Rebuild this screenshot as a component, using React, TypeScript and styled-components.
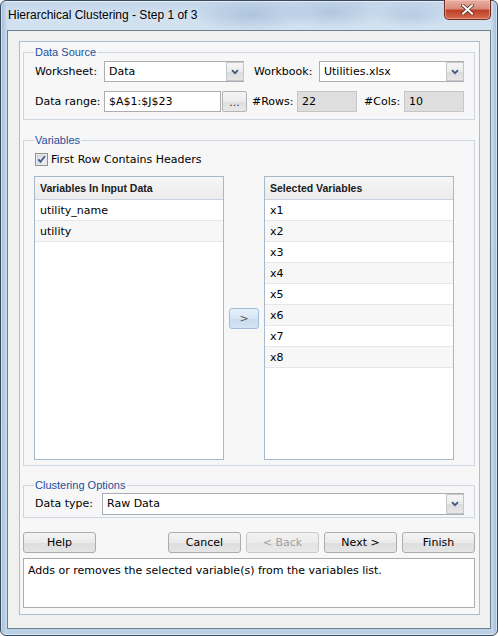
import React from 'react';
import styled, { createGlobalStyle } from 'styled-components';

const GlobalStyle = createGlobalStyle`
  html, body {
    margin: 0;
    padding: 0;
    background: #ffffff;
  }
  body {
    font-family: "DejaVu Sans", Verdana, sans-serif;
    font-size: 11px;
    color: #000;
  }
  * { box-sizing: border-box; }
`;

const Window = styled.div`
  width: 498px;
  height: 636px;
  border: 1px solid #3a4b5e;
  border-radius: 6px;
  padding: 0 6px 5px 6px;
  display: flex;
  flex-direction: column;
  background:
    radial-gradient(ellipse 60px 18px at 250px 14px, rgba(120,150,190,0.35), transparent),
    radial-gradient(ellipse 50px 16px at 330px 12px, rgba(120,150,190,0.3), transparent),
    radial-gradient(ellipse 40px 14px at 410px 14px, rgba(120,150,190,0.25), transparent),
    linear-gradient(90deg, #9fb9d6 0px, #c6d9ec 5px, transparent 7px, transparent 489px, #c6d9ec 491px, #9fb9d6 496px),
    linear-gradient(180deg, #c3d6ea 0%, #d3e2f1 4%, #c6d9ec 40%, #b9cfe6 100%);
  box-shadow: inset 0 0 0 1px rgba(255,255,255,0.55);
`;

const TitleBar = styled.div`
  height: 29px;
  display: flex;
  justify-content: space-between;
  align-items: flex-start;
`;

const Title = styled.div`
  margin-top: 7px;
  padding-left: 1px;
  font-family: "Liberation Sans", Arial, sans-serif;
  font-size: 12px;
  line-height: 15px;
  color: #000;
  text-shadow: 0 0 6px rgba(255,255,255,0.9);
`;

const CloseButton = styled.div`
  width: 47px;
  height: 20px;
  margin-top: -1px;
  border: 1px solid #6d2a1e;
  border-top: none;
  border-radius: 0 0 5px 5px;
  background: linear-gradient(180deg, #e6b1a6 0%, #d98b7a 45%, #c0402a 55%, #d36a4e 100%);
  box-shadow: inset 0 0 0 1px rgba(255,200,190,0.5);
  display: flex;
  align-items: center;
  justify-content: center;
`;

const Client = styled.div`
  border: 1px solid #6e7f90;
  background: #f0f0f0;
  padding: 10px 10px 13px 11px;
`;

const Panel = styled.div`
  border: 1px solid #a9bfd6;
  background: #f7f7f7;
  padding: 3px 4px 6px 3px;
  display: flex;
  flex-direction: column;
`;

const Group = styled.fieldset<{ $gap?: number }>`
  margin: ${p => p.$gap ?? 0}px 0 0 0;
  padding: 0;
  border: 1px solid #cdd7e1;
  min-width: 0;
`;

const Legend = styled.legend`
  margin-left: 10px;
  padding: 0 1px;
  font-family: "Liberation Sans", Arial, sans-serif;
  font-size: 11px;
  line-height: 14px;
  color: #1d4f9b;
`;

const GroupBody = styled.div<{ $pad: string }>`
  padding: ${p => p.$pad};
  display: flex;
  flex-direction: column;
`;

const Row = styled.div<{ $top?: number }>`
  display: flex;
  align-items: center;
  height: 21px;
  margin-top: ${p => p.$top ?? 0}px;
`;

const Label = styled.div<{ $w: number; $left?: number }>`
  width: ${p => p.$w}px;
  margin-left: ${p => p.$left ?? 0}px;
  white-space: nowrap;
`;

const Dropdown = styled.div<{ $w: number; $h?: number }>`
  width: ${p => p.$w}px;
  height: ${p => p.$h ?? 21}px;
  border: 1px solid #abadb3;
  background: #fff;
  display: flex;
  align-items: center;
`;

const DropText = styled.div`
  flex: 1;
  padding-left: 4px;
`;

const DropArrow = styled.div`
  width: 18px;
  height: 100%;
  border: 1px solid #c3c7cc;
  margin: -1px -1px -1px 0;
  background: linear-gradient(180deg, #f6f6f6 0%, #ebebeb 50%, #dcdcdc 51%, #e6e6e6 100%);
  display: flex;
  align-items: center;
  justify-content: center;
`;

const TextBox = styled.div<{ $w: number }>`
  width: ${p => p.$w}px;
  height: 21px;
  border: 1px solid #abadb3;
  background: #fff;
  padding-left: 4px;
  display: flex;
  align-items: center;
`;

const EllipsisButton = styled.div`
  width: 25px;
  height: 21px;
  margin-left: 1px;
  border: 1px solid #b4b4b4;
  border-radius: 2px;
  background: linear-gradient(180deg, #f4f4f4 0%, #ececec 50%, #dedede 51%, #e8e8e8 100%);
  display: flex;
  align-items: flex-end;
  justify-content: center;
  padding-bottom: 3px;
  font-size: 11px;
  line-height: 11px;
  color: #333;
`;

const ReadBox = styled.div`
  width: 60px;
  height: 21px;
  border: 1px solid #c6c6c6;
  background: #dedede;
  padding-left: 4px;
  display: flex;
  align-items: center;
`;

const CheckRow = styled.label`
  display: flex;
  align-items: center;
  gap: 3px;
  height: 13px;
  margin-left: 1px;
`;

const ListsRow = styled.div`
  display: flex;
  align-items: center;
  margin-top: 10px;
`;

const ListBox = styled.div`
  width: 190px;
  height: 284px;
  border: 1px solid #a6b8cc;
  background: #fff;
  display: flex;
  flex-direction: column;
`;

const ListHeader = styled.div`
  height: 23px;
  padding-left: 5px;
  display: flex;
  align-items: center;
  font-family: "Liberation Sans", Arial, sans-serif;
  font-weight: bold;
  font-size: 10.5px;
  color: #1a1a1a;
  background: linear-gradient(180deg, #f6f6f6 0%, #ececec 100%);
  border-bottom: 1px solid #c8d3df;
`;

const ListItem = styled.div<{ $alt: boolean }>`
  height: 21px;
  padding-left: 5px;
  display: flex;
  align-items: center;
  background: ${p => (p.$alt ? '#f7f7f7' : '#ffffff')};
  border-bottom: 1px solid #e6e6e6;
`;

const MoveButton = styled.div`
  width: 30px;
  height: 21px;
  margin: 0 5px;
  border: 1px solid #a3bcd9;
  border-radius: 3px;
  background: linear-gradient(180deg, #e6effa 0%, #d8e6f6 50%, #c9dbf1 51%, #d3e3f5 100%);
  display: flex;
  align-items: center;
  justify-content: center;
  color: #555;
`;

const ButtonRow = styled.div`
  display: flex;
  gap: 5px;
  margin-top: 14px;
`;

const Spacer = styled.div`
  flex: 1;
`;

const Button = styled.div<{ $disabled?: boolean }>`
  width: 73px;
  height: 21px;
  border: 1px solid ${p => (p.$disabled ? '#c9c9c9' : '#acacac')};
  border-radius: 3px;
  background: ${p =>
    p.$disabled
      ? 'linear-gradient(180deg, #f2f2f2 0%, #ececec 50%, #e3e3e3 51%, #e8e8e8 100%)'
      : 'linear-gradient(180deg, #f3f3f3 0%, #ebebeb 50%, #dddddd 51%, #e5e5e5 100%)'};
  color: ${p => (p.$disabled ? '#a0a0a0' : '#000')};
  display: flex;
  align-items: center;
  justify-content: center;
`;

const Description = styled.div`
  margin-top: 5px;
  height: 50px;
  border: 1px solid #abadb3;
  background: #fff;
  padding: 5px 4px;
  line-height: 14px;
`;

const Chevron = () => (
  <svg width="8" height="6" viewBox="0 0 8 6">
    <path d="M1 1.2 L4 4.2 L7 1.2" fill="none" stroke="#3e5879" strokeWidth="1.8" />
  </svg>
);

const CloseGlyph = () => (
  <svg width="13" height="11" viewBox="0 0 13 11">
    <path d="M2 1.5 L11 9.5 M11 1.5 L2 9.5" stroke="#5a2a22" strokeWidth="3.6" strokeLinecap="square" />
    <path d="M2 1.5 L11 9.5 M11 1.5 L2 9.5" stroke="#ffffff" strokeWidth="2" strokeLinecap="square" />
  </svg>
);

const CheckIcon = () => (
  <svg width="13" height="13" viewBox="0 0 13 13">
    <defs>
      <linearGradient id="cbg" x1="0" y1="0" x2="1" y2="1">
        <stop offset="0" stopColor="#d8d8d8" />
        <stop offset="1" stopColor="#f8f8f8" />
      </linearGradient>
    </defs>
    <rect x="0.5" y="0.5" width="12" height="12" fill="#fff" stroke="#8e8f8f" />
    <rect x="2" y="2" width="9" height="9" fill="url(#cbg)" stroke="#b8b8b8" strokeWidth="0.5" />
    <path d="M3.3 6.3 L5.5 8.8 L9.8 3.2" fill="none" stroke="#3e5c9a" strokeWidth="1.8" />
  </svg>
);

const Select: React.FC<{ value: string; width: number; height?: number }> = ({ value, width, height }) => (
  <Dropdown $w={width} $h={height}>
    <DropText>{value}</DropText>
    <DropArrow>
      <Chevron />
    </DropArrow>
  </Dropdown>
);

const inputVars = ['utility_name', 'utility'];
const selectedVars = ['x1', 'x2', 'x3', 'x4', 'x5', 'x6', 'x7', 'x8'];

const VarList: React.FC<{ title: string; items: string[] }> = ({ title, items }) => (
  <ListBox>
    <ListHeader>{title}</ListHeader>
    {items.map((v, i) => (
      <ListItem key={v} $alt={i % 2 === 1}>
        {v}
      </ListItem>
    ))}
  </ListBox>
);

export default function App() {
  return (
    <>
      <GlobalStyle />
      <Window>
        <TitleBar>
          <Title>Hierarchical Clustering - Step 1 of 3</Title>
          <CloseButton>
            <CloseGlyph />
          </CloseButton>
        </TitleBar>
        <Client>
          <Panel>
            <Group>
              <Legend>Data Source</Legend>
              <GroupBody $pad="2px 10px 7px 11px">
                <Row>
                  <Label $w={69}>Worksheet:</Label>
                  <Select value="Data" width={140} />
                  <Label $w={65} $left={10}>Workbook:</Label>
                  <Select value="Utilities.xlsx" width={145} />
                </Row>
                <Row $top={9}>
                  <Label $w={69}>Data range:</Label>
                  <TextBox $w={117}>$A$1:$J$23</TextBox>
                  <EllipsisButton>...</EllipsisButton>
                  <Label $w={45} $left={5}>#Rows:</Label>
                  <ReadBox>22</ReadBox>
                  <Label $w={40} $left={7}>#Cols:</Label>
                  <ReadBox>10</ReadBox>
                </Row>
              </GroupBody>
            </Group>

            <Group $gap={13}>
              <Legend>Variables</Legend>
              <GroupBody $pad="6px 10px 5px 10px">
                <CheckRow>
                  <CheckIcon />
                  First Row Contains Headers
                </CheckRow>
                <ListsRow>
                  <VarList title="Variables In Input Data" items={inputVars} />
                  <MoveButton>&gt;</MoveButton>
                  <VarList title="Selected Variables" items={selectedVars} />
                </ListsRow>
              </GroupBody>
            </Group>

            <Group $gap={12}>
              <Legend>Clustering Options</Legend>
              <GroupBody $pad="1px 10px 3px 11px">
                <Row>
                  <Label $w={67}>Data type:</Label>
                  <Select value="Raw Data" width={362} height={22} />
                </Row>
              </GroupBody>
            </Group>

            <ButtonRow>
              <Button>Help</Button>
              <Spacer />
              <Button>Cancel</Button>
              <Button $disabled>&lt; Back</Button>
              <Button>Next &gt;</Button>
              <Button>Finish</Button>
            </ButtonRow>
            <Description>Adds or removes the selected variable(s) from the variables list.</Description>
          </Panel>
        </Client>
      </Window>
    </>
  );
}
